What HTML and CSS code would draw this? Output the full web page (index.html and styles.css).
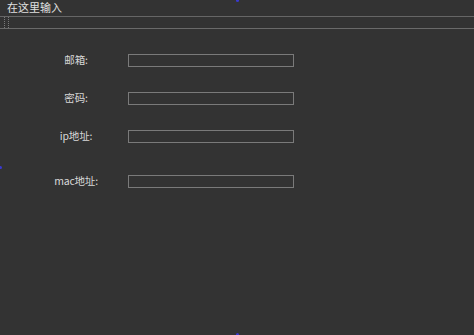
FILE: index.html
```html
<!DOCTYPE html>
<html lang="zh">
<head>
<meta charset="utf-8">
<link rel="stylesheet" href="styles.css">
</head>
<body>
<div class="header">
  <div class="title">在这里输入</div>
  <div class="toolbar"><span class="grip"></span></div>
</div>
<form class="form">
  <div class="row r1"><label class="lbl">邮箱:</label><span class="box"></span></div>
  <div class="row r2"><label class="lbl">密码:</label><span class="box"></span></div>
  <div class="row r3"><label class="lbl">ip地址:</label><span class="box"></span></div>
  <div class="row r4"><label class="lbl">mac地址:</label><span class="box"></span></div>
</form>
<span class="handle h-top"></span>
<span class="handle h-left"></span>
<span class="handle h-bottom"></span>
</body>
</html>
```
FILE: styles.css
```css
html, body {
  margin: 0;
  padding: 0;
  width: 474px;
  height: 335px;
  background: #333333;
  overflow: hidden;
  font-family: "Noto Sans CJK SC", "Noto Sans", sans-serif;
  font-size: 11px;
  color: #dcdcdc;
  position: relative;
}
.header {
  display: flex;
  flex-direction: column;
}
.title {
  height: 16px;
  line-height: 15px;
  padding-left: 7px;
  color: #e0e0e0;
}
.toolbar {
  height: 11px;
  border-top: 1px solid #666666;
  border-bottom: 1px solid #6a6a6a;
  display: flex;
  align-items: stretch;
  padding-left: 4px;
}
.grip {
  width: 3px;
  border-left: 1px dotted #7a7a7a;
  border-right: 1px dotted #7a7a7a;
}
.form {
  display: flex;
  flex-direction: column;
  margin: 0;
}
.row {
  display: flex;
  align-items: center;
  height: 13px;
}
.r1 { margin-top: 25px; }
.r2 { margin-top: 25px; }
.r3 { margin-top: 25px; }
.r4 { margin-top: 32px; }
.lbl {
  width: 74px;
  margin-left: 39px;
  text-align: center;
  font-size: 10.5px;
  line-height: 13px;
  padding-bottom: 2px;
  color: #d8d8d8;
  letter-spacing: -0.2px;
}
.box {
  margin-left: 15px;
  width: 164px;
  height: 11px;
  border: 1px solid #7a7a7a;
}
.handle {
  position: absolute;
  width: 3px;
  height: 3px;
  background: #3a3ad0;
  border-radius: 50%;
}
.h-top { left: 236px; top: -1px; }
.h-left { left: -1px; top: 166px; }
.h-bottom { left: 236px; bottom: -1px; }
```
